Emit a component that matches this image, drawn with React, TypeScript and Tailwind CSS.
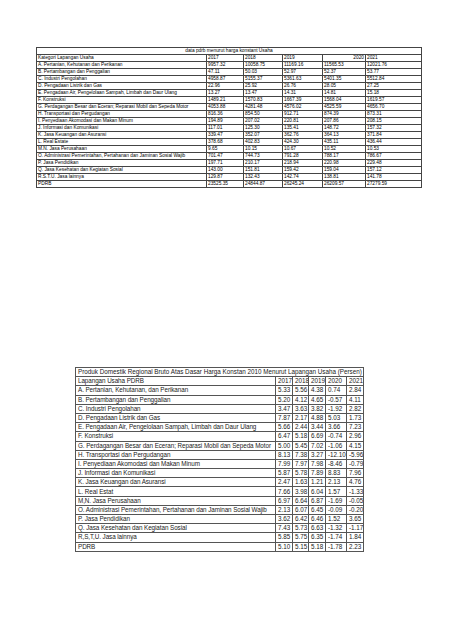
import React from 'react';

const years = ['2017', '2018', '2019', '2020', '2021'];

const nilai: [string, string[]][] = [
  ['A. Pertanian, Kehutanan dan Perikanan', ['9957.32', '10058.75', '11169.16', '11565.53', '12021.76']],
  ['B. Pertambangan dan Penggalian', ['47.11', '50.03', '52.97', '52.37', '53.77']],
  ['C. Industri Pengolahan', ['4958.87', '5155.37', '5361.63', '5401.35', '5512.84']],
  ['D. Pengadaan Listrik dan Gas', ['22.96', '25.92', '26.76', '28.05', '27.25']],
  ['E. Pengadaan Air, Pengelolaan Sampah, Limbah dan Daur Ulang', ['13.27', '13.47', '14.31', '14.81', '15.18']],
  ['F. Konstruksi', ['1489.21', '1570.83', '1667.39', '1568.04', '1619.57']],
  ['G. Perdagangan Besar dan Eceran; Reparasi Mobil dan Sepeda Motor', ['4053.88', '4281.48', '4576.02', '4525.59', '4656.70']],
  ['H. Transportasi dan Pergudangan', ['816.36', '854.50', '912.71', '874.39', '873.31']],
  ['I. Penyediaan Akomodasi dan Makan Minum', ['194.89', '207.02', '220.81', '207.86', '208.15']],
  ['J. Informasi dan Komunikasi', ['117.01', '125.30', '135.41', '148.72', '157.32']],
  ['K. Jasa Keuangan dan Asuransi', ['339.47', '352.07', '362.76', '364.13', '371.84']],
  ['L. Real Estate', ['378.68', '402.83', '424.30', '435.11', '436.44']],
  ['M.N. Jasa Perusahaan', ['9.65', '10.15', '10.67', '10.52', '10.53']],
  ['O. Administrasi Pemerintahan, Pertahanan dan Jaminan Sosial Wajib', ['701.47', '744.73', '791.28', '788.17', '786.67']],
  ['P. Jasa Pendidikan', ['197.71', '210.17', '218.94', '220.98', '229.48']],
  ['Q. Jasa Kesehatan dan Kegiatan Sosial', ['143.00', '151.81', '159.42', '159.04', '157.12']],
  ['R.S.T.U. Jasa lainnya', ['129.87', '132.43', '142.74', '138.81', '141.78']],
  ['PDRB', ['23525.35', '24844.87', '26245.24', '26209.57', '27279.59']],
];

const persen: [string, string[]][] = [
  ['A. Pertanian, Kehutanan, dan Perikanan', ['5.33', '5.56', '4.38', '0.74', '2.84']],
  ['B. Pertambangan dan Penggalian', ['5.20', '4.12', '4.65', '-0.57', '4.11']],
  ['C. Industri Pengolahan', ['3.47', '3.63', '3.82', '-1.92', '2.82']],
  ['D. Pengadaan Listrik dan Gas', ['7.87', '2.17', '4.88', '5.03', '1.73']],
  ['E. Pengadaan Air, Pengelolaan Sampah, Limbah dan Daur Ulang', ['5.66', '2.44', '3.44', '3.66', '7.23']],
  ['F. Konstruksi', ['6.47', '5.18', '6.69', '-0.74', '2.96']],
  ['G. Perdagangan Besar dan Eceran; Reparasi Mobil dan Sepeda Motor', ['5.00', '5.45', '7.02', '-1.06', '4.15']],
  ['H. Transportasi dan Pergudangan', ['8.13', '7.38', '3.27', '-12.10', '-5.96']],
  ['I. Penyediaan Akomodasi dan Makan Minum', ['7.99', '7.97', '7.98', '-8.46', '-0.79']],
  ['J. Informasi dan Komunikasi', ['5.87', '5.78', '7.89', '8.83', '7.96']],
  ['K. Jasa Keuangan dan Asuransi', ['2.47', '1.63', '1.21', '2.13', '4.76']],
  ['L. Real Estat', ['7.66', '3.98', '6.04', '1.57', '-1.33']],
  ['M,N. Jasa Perusahaan', ['6.97', '6.64', '6.87', '-1.69', '-0.05']],
  ['O. Administrasi Pemerintahan, Pertahanan dan Jaminan Sosial Wajib', ['2.13', '6.07', '6.45', '-0.09', '-0.20']],
  ['P. Jasa Pendidikan', ['3.62', '6.42', '6.46', '1.52', '3.65']],
  ['Q. Jasa Kesehatan dan Kegiatan Sosial', ['7.43', '5.73', '6.63', '-1.32', '-1.17']],
  ['R,S,T,U. Jasa lainnya', ['5.85', '5.75', '6.35', '-1.74', '1.84']],
  ['PDRB', ['5.10', '5.15', '5.18', '-1.78', '2.23']],
];

// tabel nilai (atas)
const TabelNilai = () => {
  const cell = 'border border-[#444] px-[1px] h-[7px] p-0 leading-[6px] whitespace-nowrap overflow-hidden';
  return (
    <table className="table-fixed border-collapse border-[1.5px] border-[#222] w-[385px] text-[4.8px] text-black">
      <colgroup>
        <col className="w-[170px]" />
        <col className="w-[37px]" />
        <col className="w-[39px]" />
        <col className="w-[40px]" />
        <col className="w-[43px]" />
        <col className="w-[56px]" />
      </colgroup>
      <tbody>
        <tr>
          <td colSpan={6} className={cell + ' text-center'}>data pdrb menurut harga konstant Usaha</td>
        </tr>
        <tr>
          <td className={cell}>Kategori Lapangan Usaha</td>
          {years.map((y) => (
            <td key={y} className={cell + (y === '2020' ? ' text-right' : '')}>{y}</td>
          ))}
        </tr>
        {nilai.map(([label, vals]) => (
          <tr key={label}>
            <td className={cell}>{label}</td>
            {vals.map((v, i) => (
              <td key={i} className={cell}>{v}</td>
            ))}
          </tr>
        ))}
      </tbody>
    </table>
  );
};

// tabel persen (bawah)
const TabelPersen = () => {
  const cell = 'border border-[#555] px-[2px] h-[9.2px] p-0 leading-[8px] whitespace-nowrap overflow-hidden';
  const label = cell + ' tracking-[-0.07px]';
  return (
    <table className="table-fixed border-collapse border border-[#333] w-[288px] text-[6.3px] text-[#1a1a1a]">
      <colgroup>
        <col className="w-[200px]" />
        <col className="w-[17px]" />
        <col className="w-[16px]" />
        <col className="w-[17px]" />
        <col className="w-[21px]" />
        <col className="w-[17px]" />
      </colgroup>
      <tbody>
        <tr>
          <td colSpan={6} className={cell + ' text-center'}>
            Produk Domestik Regional Bruto Atas Dasar Harga Konstan 2010 Menurut Lapangan Usaha (Persen)
          </td>
        </tr>
        <tr>
          <td className={label}>Lapangan Usaha PDRB</td>
          {years.map((y) => (
            <td key={y} className={cell}>{y}</td>
          ))}
        </tr>
        {persen.map(([lbl, vals]) => (
          <tr key={lbl}>
            <td className={label}>{lbl}</td>
            {vals.map((v, i) => (
              <td key={i} className={cell}>{v}</td>
            ))}
          </tr>
        ))}
      </tbody>
    </table>
  );
};

export default function App() {
  return (
    <div className="w-[474px] h-[632px] bg-white font-['Liberation_Sans',Arial,sans-serif]">
      <div className="pt-[47px] pl-[36px]">
        <TabelNilai />
      </div>
      <div className="pt-[179px] pl-[75px]">
        <TabelPersen />
      </div>
    </div>
  );
}
